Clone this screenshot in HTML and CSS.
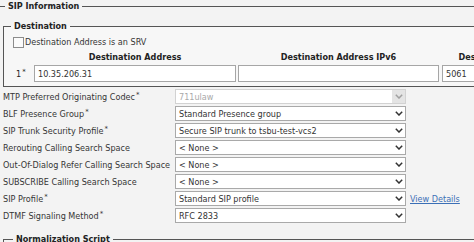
FILE: index.html
```html
<!DOCTYPE html>
<html lang="en">
<head>
    <meta charset="UTF-8">
    <meta name="viewport" content="width=device-width, initial-scale=1.0">
    <title>SIP Information</title>
    <link rel="stylesheet" href="styles.css">
</head>
<body>
    <div class="page">
        <fieldset class="sip-info">
            <legend>SIP Information</legend>

            <fieldset class="destination">
                <legend>Destination</legend>
                <label class="srv"><input type="checkbox"> Destination Address is an SRV</label>
                <div class="dest-grid">
                    <span></span>
                    <span class="col-head">Destination Address</span>
                    <span class="col-head">Destination Address IPv6</span>
                    <span class="col-head">Destination Port</span>

                    <span class="row-num">1<sup>*</sup></span>
                    <input class="text-box" type="text" value="10.35.206.31">
                    <input class="text-box" type="text" value="">
                    <input class="text-box port" type="text" value="5061">
                </div>
            </fieldset>

            <div class="form-rows">
                <div class="field-label">MTP Preferred Originating Codec<sup>*</sup></div>
                <div class="select disabled"><span>711ulaw</span><span class="arrow"><svg width="8" height="5" viewBox="0 0 8 5"><polyline points="0.8,0.8 4,4 7.2,0.8"/></svg></span></div>
                <div></div>

                <div class="field-label">BLF Presence Group<sup>*</sup></div>
                <div class="select"><span>Standard Presence group</span><span class="arrow"><svg width="8" height="5" viewBox="0 0 8 5"><polyline points="0.8,0.8 4,4 7.2,0.8"/></svg></span></div>
                <div></div>

                <div class="field-label">SIP Trunk Security Profile<sup>*</sup></div>
                <div class="select"><span>Secure SIP trunk to tsbu-test-vcs2</span><span class="arrow"><svg width="8" height="5" viewBox="0 0 8 5"><polyline points="0.8,0.8 4,4 7.2,0.8"/></svg></span></div>
                <div></div>

                <div class="field-label">Rerouting Calling Search Space</div>
                <div class="select"><span>&lt; None &gt;</span><span class="arrow"><svg width="8" height="5" viewBox="0 0 8 5"><polyline points="0.8,0.8 4,4 7.2,0.8"/></svg></span></div>
                <div></div>

                <div class="field-label">Out-Of-Dialog Refer Calling Search Space</div>
                <div class="select"><span>&lt; None &gt;</span><span class="arrow"><svg width="8" height="5" viewBox="0 0 8 5"><polyline points="0.8,0.8 4,4 7.2,0.8"/></svg></span></div>
                <div></div>

                <div class="field-label">SUBSCRIBE Calling Search Space</div>
                <div class="select"><span>&lt; None &gt;</span><span class="arrow"><svg width="8" height="5" viewBox="0 0 8 5"><polyline points="0.8,0.8 4,4 7.2,0.8"/></svg></span></div>
                <div></div>

                <div class="field-label">SIP Profile<sup>*</sup></div>
                <div class="select"><span>Standard SIP profile</span><span class="arrow"><svg width="8" height="5" viewBox="0 0 8 5"><polyline points="0.8,0.8 4,4 7.2,0.8"/></svg></span></div>
                <div><a class="details-link" href="#">View Details</a></div>

                <div class="field-label">DTMF Signaling Method<sup>*</sup></div>
                <div class="select"><span>RFC 2833</span><span class="arrow"><svg width="8" height="5" viewBox="0 0 8 5"><polyline points="0.8,0.8 4,4 7.2,0.8"/></svg></span></div>
                <div></div>
            </div>

            <fieldset class="normalization">
                <legend>Normalization Script</legend>
            </fieldset>
        </fieldset>
    </div>
</body>
</html>
```

FILE: styles.css
```css
* {
    box-sizing: border-box;
}

body {
    margin: 0;
    width: 474px;
    height: 242px;
    overflow: hidden;
    background: #f3f3f3;
    font-family: 'DejaVu Sans', Verdana, sans-serif;
    font-size: 8.1px;
    line-height: 10px;
    color: #353535;
}

.page {
    width: 620px;
    margin-left: -4px;
}

fieldset {
    min-width: 0;
    margin: 0;
    border: 1px solid #555;
}

legend {
    padding: 0 3px;
    font-weight: bold;
    color: #222;
    line-height: 10px;
}

sup {
    font-size: 7px;
    line-height: 0;
    vertical-align: 3px;
    margin-left: 1px;
}

.sip-info {
    margin-top: 1px;
    padding: 10px 0 0 6px;
    border-bottom: none;
}

.sip-info > legend {
    margin-left: 2px;
}

.destination {
    padding: 0 0 4px 0;
    background: #f7f7f7;
}

.destination > legend {
    margin-left: 7px;
}

.srv {
    display: flex;
    align-items: center;
    gap: 1px;
    height: 12px;
    margin: 5px 0 0 9px;
}

.srv input {
    appearance: none;
    width: 11px;
    height: 11px;
    margin: 0;
    border: 1px solid #8c8c8c;
    background: #fbfbfb;
}

.dest-grid {
    display: grid;
    grid-template-columns: 28px 202px 201px 110px;
    grid-template-rows: 10px 17px;
    column-gap: 2px;
    row-gap: 3px;
    margin-top: 4px;
    align-items: center;
}

.col-head {
    text-align: center;
    font-weight: bold;
    color: #222;
    white-space: nowrap;
}

.row-num {
    padding-left: 12px;
    color: #222;
}

.text-box {
    height: 17px;
    margin: 0;
    padding: 0 3px;
    border: 1px solid #a6a6a6;
    background: #fff;
    font: inherit;
    color: #333;
}

.port {
    margin-left: 1px;
}

.form-rows {
    display: grid;
    grid-template-columns: 172px 231px auto;
    grid-auto-rows: 15px;
    row-gap: 2px;
    margin-top: 2px;
    align-items: center;
}

.field-label {
    white-space: nowrap;
}

.select {
    display: flex;
    align-items: center;
    justify-content: space-between;
    height: 15px;
    padding-left: 3px;
    border: 1px solid #a9a9a9;
    background: #fff;
    color: #333;
}

.arrow {
    display: flex;
    align-items: center;
    justify-content: center;
    width: 13px;
    height: 100%;
}

.arrow polyline {
    fill: none;
    stroke: #333;
    stroke-width: 1.5;
}

.select.disabled {
    border-color: #d2d2d2;
    color: #a9a9a9;
}

.select.disabled .arrow {
    background: #e4e4e4;
}

.select.disabled .arrow polyline {
    stroke: #a0a0a0;
}

.details-link {
    margin-left: 4px;
    color: #3b6fb6;
}

.normalization {
    margin-top: 11px;
    padding: 0;
    height: 20px;
    border-bottom: none;
}

.normalization > legend {
    margin-left: 9px;
}
```
